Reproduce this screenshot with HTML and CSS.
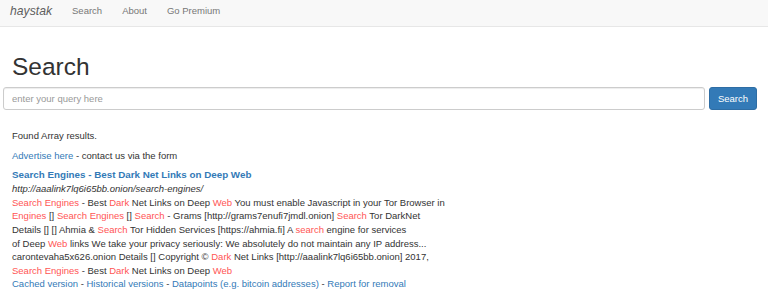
FILE: index.html
```html
<!DOCTYPE html>
<html>
<head>
<meta charset="utf-8">
<title>haystak</title>
<link rel="stylesheet" href="styles.css">
</head>
<body>
<nav class="navbar">
  <a class="brand" href="#">haystak</a>
  <a class="nav-link" href="#">Search</a>
  <a class="nav-link" href="#">About</a>
  <a class="nav-link" href="#">Go Premium</a>
</nav>
<div class="page">
  <h1 class="title">Search</h1>
  <form class="search-form">
    <input class="query" type="text" placeholder="enter your query here">
    <button class="btn" type="button">Search</button>
  </form>
  <div class="results">
    <p class="found">Found Array results.</p>
    <p class="ad"><a href="#">Advertise here</a> - contact us via the form</p>
    <div class="result">
      <a class="result-title" href="#">Search Engines - Best Dark Net Links on Deep Web</a>
      <div class="result-url">http://aaalink7lq6i65bb.onion/search-engines/</div>
      <div class="snippet">
        <span class="hl">Search Engines</span> - Best <span class="hl">Dark</span> Net Links on Deep <span class="hl">Web</span> You must enable Javascript in your Tor Browser in<br>
        <span class="hl">Engines</span> [] <span class="hl">Search Engines</span> [] <span class="hl">Search</span> - Grams [http://grams7enufi7jmdl.onion] <span class="hl">Search</span> Tor DarkNet<br>
        Details [] [] Ahmia &amp; <span class="hl">Search</span> Tor Hidden Services [https://ahmia.fi] A <span class="hl">search</span> engine for services<br>
        of Deep <span class="hl">Web</span> links We take your privacy seriously: We absolutely do not maintain any IP address...<br>
        carontevaha5x626.onion Details [] Copyright © <span class="hl">Dark</span> Net Links [http://aaalink7lq6i65bb.onion] 2017,<br>
        <span class="hl">Search Engines</span> - Best <span class="hl">Dark</span> Net Links on Deep <span class="hl">Web</span>
      </div>
      <div class="result-links">
        <a href="#">Cached version</a> - <a href="#">Historical versions</a> - <a href="#">Datapoints (e.g. bitcoin addresses)</a> - <a href="#">Report for removal</a>
      </div>
    </div>
  </div>
</div>
</body>
</html>
```

FILE: styles.css
```css
html, body {
  margin: 0;
  padding: 0;
  background: #fff;
}
body {
  font-family: "Liberation Sans", Arial, Helvetica, sans-serif;
  font-size: 9.5px;
  line-height: 13.6px;
  color: #333;
}
a {
  color: #337ab7;
  text-decoration: none;
}
.navbar {
  display: flex;
  align-items: center;
  box-sizing: border-box;
  height: 27px;
  padding: 0 0 4px 0;
  background: #f8f8f8;
  border-bottom: 1px solid #e7e7e7;
}
.brand {
  font-size: 12.2px;
  font-style: italic;
  color: #5e5e5e;
  padding: 0 10px;
  line-height: 14px;
}
.nav-link {
  color: #777;
  padding: 0 10px;
  line-height: 14px;
}
.title {
  font-size: 24.5px;
  font-weight: 500;
  line-height: 27px;
  margin: 26px 0 7px 12px;
  color: #333;
}
.search-form {
  display: flex;
  gap: 4px;
  margin: 0 11px 0 3px;
}
.query {
  flex: 1;
  height: 23px;
  box-sizing: border-box;
  padding: 4px 8px;
  font-family: inherit;
  font-size: 9.5px;
  color: #555;
  border: 1px solid #ccc;
  border-radius: 3px;
  box-shadow: inset 0 1px 1px rgba(0,0,0,.075);
  outline: none;
}
.query::placeholder {
  color: #999;
}
.btn {
  height: 23px;
  box-sizing: border-box;
  padding: 0 8px;
  font-family: inherit;
  font-size: 9.5px;
  color: #fff;
  background: #337ab7;
  border: 1px solid #2e6da4;
  border-radius: 3px;
}
.results {
  padding: 0 12px;
  margin-top: 19px;
}
.results p {
  margin: 0 0 6.8px 0;
}
.result {
  margin-top: -1.5px;
  white-space: nowrap;
}
.result-title {
  display: block;
  font-weight: bold;
  font-size: 9.8px;
  line-height: 14px;
}
.result-url {
  font-style: italic;
}
.hl {
  color: #f55;
}
```
